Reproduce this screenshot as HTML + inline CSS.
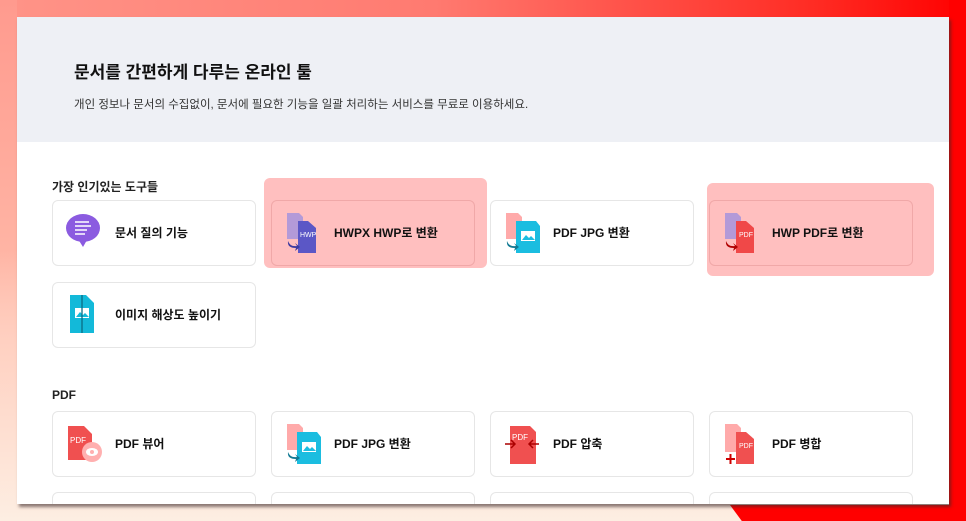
<!DOCTYPE html>
<html><head><meta charset="utf-8"><style>
*{margin:0;padding:0;box-sizing:border-box}
html,body{width:966px;height:521px;overflow:hidden}
body{position:relative;font-family:"Liberation Sans","Noto Sans CJK KR",sans-serif;
background:linear-gradient(90deg,#ff9488 0%,#ff7a70 45%,#ff2a22 85%,#ff0000 100%);}
.bot{position:absolute;left:0;top:250px;width:966px;height:271px;background:linear-gradient(180deg,rgba(255,200,185,0) 0%,#ffd3c4 40%,#fdeee2 100%);}
.lefts{position:absolute;left:0;top:0;width:17px;height:521px;background:linear-gradient(180deg,#ff9a8e,#ffb5a5 50%,#ffd8c8)}
.tri{position:absolute;left:730px;top:505px;width:236px;height:16px;background:#ff0000;clip-path:polygon(0 0,100% 0,100% 100%,5% 100%)}
.redr{position:absolute;left:949px;top:0;width:17px;height:521px;background:#ff0000}
.panel{position:absolute;left:17px;top:17px;width:932px;height:487px;background:#fff;box-shadow:2px 3px 3px rgba(60,40,40,.6);overflow:hidden}
.hdr{height:125px;background:#eef0f5;padding:44px 0 0 57px}
.hdr h1{font-size:17px;font-weight:bold;color:#111;line-height:24px}
.hdr p{font-size:11.5px;color:#333;margin-top:11px}
.sec{position:absolute;left:35px;font-size:12px;font-weight:bold;color:#222}
.hl{position:absolute;background:#ffbfbf;border-radius:6px}
.card{position:absolute;width:204px;height:66px;border:1px solid #e6e6e6;border-radius:6px;background:#fff}
.card.t{background:transparent;border-color:#f0a8a8}
.card svg{position:absolute;left:13px;top:12px}
.card span{position:absolute;left:62px;top:23px;font-size:12px;font-weight:bold;color:#111}
</style></head><body>
<div class="lefts"></div><div class="bot"></div><div class="redr"></div><div class="tri"></div>
<div class="panel">
<div class="hdr"><h1>문서를 간편하게 다루는 온라인 툴</h1><p>개인 정보나 문서의 수집없이, 문서에 필요한 기능을 일괄 처리하는 서비스를 무료로 이용하세요.</p></div>
<div class="sec" style="top:161px">가장 인기있는 도구들</div>
<div class="hl" style="left:247px;top:161px;width:223px;height:90px"></div>
<div class="hl" style="left:690px;top:166px;width:227px;height:93px"></div>

<div class="card" style="left:35px;top:183px"><svg width="36" height="36"><ellipse cx="17" cy="15" rx="17" ry="14" fill="#8b5be0"/><path d="M12 26l5 8 4-7z" fill="#8b5be0"/><path d="M9 9h14M9 13h16M9 17h12M9 21h10" stroke="#fff" stroke-width="1.6"/></svg><span>문서 질의 기능</span></div>
<div class="card t" style="left:254px;top:183px"><svg width="36" height="40"><path d="M2 0h12l4 4v22H2z" fill="#b39ad8"/><path d="M13 8h10l8 7v25H13z" fill="#5b57c6"/><text x="15" y="24" font-size="7" fill="#fff" font-family="Liberation Sans">HWP</text><path d="M3 28q2 6 9 5l-2-3 5 4-5 4 1-3q-9 0-8-7z" fill="#3d3aa0"/></svg><span>HWPX HWP로 변환</span></div>
<div class="card" style="left:473px;top:183px"><svg width="38" height="40"><path d="M2 0h12l4 4v22H2z" fill="#ffaaaa"/><path d="M12 8h20l4 5v27H12z" fill="#1bbde0"/><rect x="17" y="18" width="14" height="10" fill="#fff"/><path d="M18 27l4-5 3 3 2-2 4 4z" fill="#1bbde0"/><path d="M3 28q2 6 9 5l-2-3 5 4-5 4 1-3q-9 0-8-7z" fill="#127a94"/></svg><span>PDF JPG 변환</span></div>
<div class="card t" style="left:692px;top:183px"><svg width="36" height="40"><path d="M2 0h12l4 4v22H2z" fill="#b39ad8"/><path d="M13 8h10l8 7v25H13z" fill="#f04848"/><text x="16" y="24" font-size="7" fill="#fff" font-family="Liberation Sans">PDF</text><path d="M3 28q2 6 9 5l-2-3 5 4-5 4 1-3q-9 0-8-7z" fill="#b00000"/></svg><span>HWP PDF로 변환</span></div>
<div class="card" style="left:35px;top:265px"><svg width="36" height="40"><path d="M4 0h16l8 8v30H4z" fill="#13b9d9"/><rect x="9" y="13" width="14" height="10" fill="#fff"/><path d="M10 22l4-5 3 3 2-2 4 4z" fill="#13b9d9"/><path d="M16 0v38" stroke="#0a6c84" stroke-width="1.3"/></svg><span>이미지 해상도 높이기</span></div>

<div class="sec" style="top:371px">PDF</div>
<div class="card" style="left:35px;top:394px"><svg width="38" height="40"><path d="M2 2h16l8 8v26H2z" fill="#f05050"/><text x="4" y="19" font-size="8" fill="#fff" font-family="Liberation Sans">PDF</text><circle cx="26" cy="28" r="10" fill="#ffb0b0"/><ellipse cx="26" cy="28" rx="6" ry="4" fill="#fff"/><circle cx="26" cy="28" r="2" fill="#ffb0b0"/></svg><span>PDF 뷰어</span></div>
<div class="card" style="left:254px;top:394px"><svg width="38" height="40"><path d="M2 0h12l4 4v22H2z" fill="#ffaaaa"/><path d="M12 8h20l4 5v27H12z" fill="#1bbde0"/><rect x="17" y="18" width="14" height="10" fill="#fff"/><path d="M18 27l4-5 3 3 2-2 4 4z" fill="#1bbde0"/><path d="M3 28q2 6 9 5l-2-3 5 4-5 4 1-3q-9 0-8-7z" fill="#127a94"/></svg><span>PDF JPG 변환</span></div>
<div class="card" style="left:473px;top:394px"><svg width="38" height="40"><path d="M6 2h20l6 6v32H6z" fill="#f05050"/><text x="8" y="16" font-size="8" fill="#fff" font-family="Liberation Sans">PDF</text><path d="M1 20h10M7 16l4 4-4 4M35 20H25M29 16l-4 4 4 4" stroke="#a00" stroke-width="1.5" fill="none"/></svg><span>PDF 압축</span></div>
<div class="card" style="left:692px;top:394px"><svg width="38" height="40"><path d="M2 0h12l4 4v24H2z" fill="#ffaaaa"/><path d="M13 8h10l8 7v25H13z" fill="#f05050"/><text x="16" y="24" font-size="7" fill="#fff" font-family="Liberation Sans">PDF</text><path d="M3 35h9M7.5 30v10" stroke="#c00" stroke-width="2"/></svg><span>PDF 병합</span></div>
<div class="card" style="left:35px;top:475px"></div><div class="card" style="left:254px;top:475px"></div><div class="card" style="left:473px;top:475px"></div><div class="card" style="left:692px;top:475px"></div>
</div>
</body></html>
